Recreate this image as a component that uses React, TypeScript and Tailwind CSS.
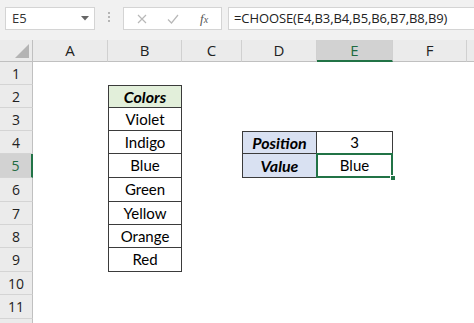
const cols = [
  { key: 'A', w: 75 },
  { key: 'B', w: 74 },
  { key: 'C', w: 60 },
  { key: 'D', w: 75 },
  { key: 'E', w: 76 },
  { key: 'F', w: 74 },
  { key: 'G', w: 74 },
];

const rowHeights = [23, 23, 23, 23, 24, 24, 23, 23, 24, 23, 24, 23];

const colors = ['Violet', 'Indigo', 'Blue', 'Green', 'Yellow', 'Orange', 'Red'];

function cellFor(row: number, col: string) {
  // Colors table (B2:B9)
  if (col === 'B' && row >= 2 && row <= 9) {
    const isHead = row === 2;
    return (
      <div
        className={`flex h-full items-center justify-center border-x border-b border-[#3b3b3b] ${
          isHead ? 'border-t bg-[#e2efda] text-[16px] font-bold italic' : 'bg-white'
        }`}
      >
        {isHead ? 'Colors' : colors[row - 3]}
      </div>
    );
  }
  if (col === 'D' && (row === 4 || row === 5)) {
    return (
      <div
        className={`flex h-full items-center justify-center border-x border-b border-[#3b3b3b] bg-[#d9e1f2] text-[16px] font-bold italic ${
          row === 4 ? 'border-t' : ''
        }`}
      >
        {row === 4 ? 'Position' : 'Value'}
      </div>
    );
  }
  if (col === 'E' && (row === 4 || row === 5)) {
    return (
      <div
        className={`relative flex h-full items-center justify-center border-r border-b border-[#3b3b3b] bg-white ${
          row === 4 ? 'border-t' : ''
        }`}
      >
        {row === 4 ? '3' : 'Blue'}
        {row === 5 && (
          <>
            <div className="absolute -left-px -top-px -right-px -bottom-px border-2 border-[#217346]" />
            <div className="absolute -right-[4px] -bottom-[4px] h-[6px] w-[6px] border border-white bg-[#217346]" />
          </>
        )}
      </div>
    );
  }
  return null;
}

export default function App() {
  return (
    <div className="h-[323px] w-[474px] overflow-hidden bg-white font-['Open_Sans',sans-serif]">
      {/* formula bar */}
      <div className="flex h-[40px] items-start gap-0 bg-[#f1f1f1] pt-[7px]">
        <div className="ml-[5px] flex h-[23px] w-[90px] items-center justify-between border border-[#d4d4d4] bg-white pl-[6px] pr-[5px] text-[13px] text-[#333]">
          <span>E5</span>
          <svg width="8" height="5" viewBox="0 0 8 5">
            <path d="M0 0h8L4 4.5z" fill="#666" />
          </svg>
        </div>
        <div className="flex w-[28px] flex-col items-center justify-center gap-[2px] pt-[5px]">
          <span className="h-[2px] w-[2px] rounded-full bg-[#a0a0a0]" />
          <span className="h-[2px] w-[2px] rounded-full bg-[#a0a0a0]" />
          <span className="h-[2px] w-[2px] rounded-full bg-[#a0a0a0]" />
        </div>
        <div className="flex h-[23px] w-[99px] items-center border border-[#d4d4d4] bg-white">
          <svg className="ml-[13px]" width="10" height="10" viewBox="0 0 10 10">
            <path d="M1 1l8 8M9 1l-8 8" stroke="#b8b8b8" strokeWidth="1.2" />
          </svg>
          <svg className="ml-[20px]" width="12" height="10" viewBox="0 0 12 10">
            <path d="M1 5.5l3.5 3.5L11 1" stroke="#b8b8b8" strokeWidth="1.2" fill="none" />
          </svg>
          <span className="ml-[21px] font-['Liberation_Serif',serif] text-[13px] italic text-[#555]">
            f<span className="text-[10px]">x</span>
          </span>
        </div>
        <div className="ml-[6px] flex h-[23px] flex-1 items-center border border-r-0 border-[#d4d4d4] bg-white pl-[5px] text-[13px] tracking-[-0.1px] text-[#222]">
          =CHOOSE(E4,B3,B4,B5,B6,B7,B8,B9)
        </div>
      </div>

      {/* sheet */}
      <div
        className="grid"
        style={{
          gridTemplateColumns: `33px ${cols.map((c) => c.w + 'px').join(' ')}`,
          gridTemplateRows: `22px ${rowHeights.map((h) => h + 'px').join(' ')}`,
        }}
      >
        {/* corner */}
        <div className="relative border-r border-b border-[#c0c0c0] bg-[#ebebeb]">
          <svg className="absolute bottom-[3px] right-[3px]" width="14" height="14" viewBox="0 0 14 14">
            <path d="M14 0V14H0z" fill="#b4b4b4" />
          </svg>
        </div>
        {cols.map((c) => (
          <div
            key={c.key}
            className={`flex items-center justify-center border-r border-[#d0d0d0] text-[15px] ${
              c.key === 'E'
                ? 'border-b-2 border-b-[#217346] bg-[#d2d2d2] text-[#1e6b41]'
                : 'border-b border-b-[#c0c0c0] bg-[#ebebeb] text-[#222]'
            }`}
          >
            {c.key === 'G' ? '' : c.key}
          </div>
        ))}
        {rowHeights.map((_, i) => {
          const row = i + 1;
          return [
            <div
              key={`h${row}`}
              className={`flex items-center justify-center border-b border-b-[#d4d4d4] text-[14px] ${
                row === 5
                  ? 'border-r-2 border-r-[#217346] bg-[#d2d2d2] text-[#1e6b41]'
                  : 'border-r border-r-[#c0c0c0] bg-[#ebebeb] text-[#222]'
              }`}
            >
              {row <= 11 ? row : ''}
            </div>,
            ...cols.map((c) => (
              <div key={`${c.key}${row}`} className="font-['Lato',sans-serif] text-[15px] text-black">
                {cellFor(row, c.key)}
              </div>
            )),
          ];
        })}
      </div>
    </div>
  );
}
